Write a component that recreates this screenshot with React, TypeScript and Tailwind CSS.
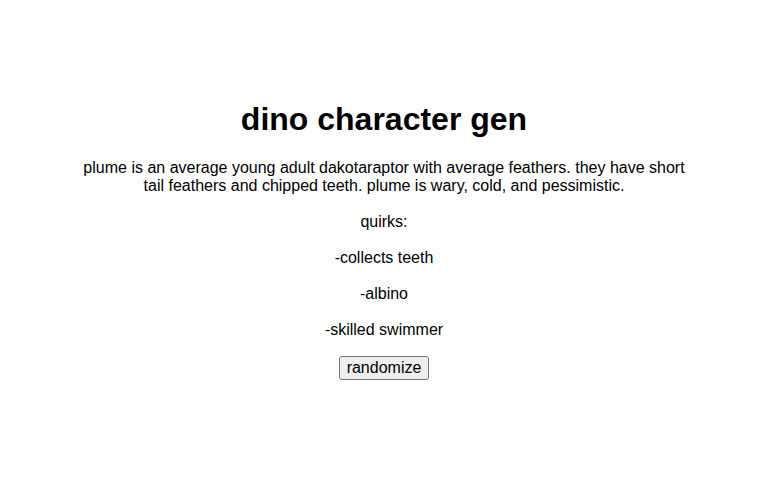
import { useState } from "react";

const dino = {
  name: "plume",
  blurb:
    "plume is an average young adult dakotaraptor with average feathers. they have short tail feathers and chipped teeth. plume is wary, cold, and pessimistic.",
  quirks: ["collects teeth", "albino", "skilled swimmer"],
};

export default function App() {
  const [count, setCount] = useState(0);

  return (
    <main className="min-h-screen bg-white text-black flex flex-col items-center justify-center text-center font-['Liberation_Sans',Arial,sans-serif]">
      <h1 className="text-[32px] leading-[37px] font-bold mb-[21px]">dino character gen</h1>

      <div className="max-w-[614px] flex flex-col gap-[18px] text-[16px] leading-[18px]">
        <p>{dino.blurb}</p>
        <p>quirks:</p>
        {dino.quirks.map((q) => (
          <p key={q}>-{q}</p>
        ))}
      </div>

      <button
        type="button"
        onClick={() => setCount(count + 1)}
        className="mt-[17px] px-[7px] py-[2px] text-[16px] leading-[18px] bg-[#efefef] border border-[#767676] rounded-[3px] hover:bg-[#e5e5e5]"
      >
        randomize
      </button>
    </main>
  );
}
